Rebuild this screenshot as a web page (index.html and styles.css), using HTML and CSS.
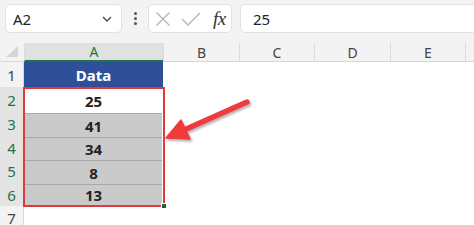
FILE: index.html
```html
<!DOCTYPE html>
<html>
<head>
<meta charset="utf-8">
<link rel="stylesheet" href="styles.css">
</head>
<body>
<div class="app">
  <div class="toolbar">
    <div class="namebox">
      <span class="name">A2</span>
      <svg class="chev" width="10" height="6" viewBox="0 0 10 6"><polyline points="1,1 5,5 9,1" fill="none" stroke="#444" stroke-width="1.3"/></svg>
    </div>
    <div class="dots"><i></i><i></i><i></i></div>
    <div class="fbtns">
      <svg width="16" height="16" viewBox="0 0 16 16"><path d="M1.5 1.5 L14.5 14.5 M14.5 1.5 L1.5 14.5" stroke="#b4b4b4" stroke-width="1.4" fill="none"/></svg>
      <svg width="20" height="16" viewBox="0 0 20 16"><polyline points="1,8 7,14 19,2" stroke="#b4b4b4" stroke-width="1.4" fill="none"/></svg>
      <span class="fx">fx</span>
    </div>
    <div class="finput">25</div>
  </div>
  <div class="sheet">
    <div class="corner"><svg width="14" height="12" viewBox="0 0 14 12"><polygon points="13,0 13,11 1,11" fill="#d6d6d6"/></svg></div>
    <div class="ch sel">A</div>
    <div class="ch">B</div>
    <div class="ch">C</div>
    <div class="ch">D</div>
    <div class="ch">E</div>
    <div class="ch last"></div>

    <div class="rh">1</div>
    <div class="cell head">Data</div>
    <div class="cell blank span5"></div>

    <div class="rh rsel">2</div>
    <div class="selection">
      <div class="scell active">25</div>
      <div class="scell">41</div>
      <div class="scell">34</div>
      <div class="scell">8</div>
      <div class="scell">13</div>
      <span class="handle"></span>
    </div>
    <div class="cell blank span5 r2"></div>
    <div class="rh rsel">3</div>
    <div class="rh rsel">4</div>
    <div class="rh rsel">5</div>
    <div class="rh rsel">6</div>
    <div class="rh">7</div>
    <div class="cell blank"></div>

    <svg class="arrow" width="100" height="56" viewBox="0 0 100 56">
      <defs>
        <filter id="sh" x="-20%" y="-20%" width="140%" height="150%">
          <feDropShadow dx="1.5" dy="2" stdDeviation="1.2" flood-color="#000" flood-opacity="0.3"/>
        </filter>
      </defs>
      <g filter="url(#sh)">
        <line x1="87" y1="7" x2="24" y2="35" stroke="#ee3b3b" stroke-width="5.5" stroke-linecap="round"/>
        <polygon points="6,43 21,25 30,44" fill="#ee3b3b" stroke="#ee3b3b" stroke-width="1.5" stroke-linejoin="round"/>
      </g>
    </svg>
  </div>
</div>
</body>
</html>
```

FILE: styles.css
```css
* { box-sizing: border-box; }
html, body { margin: 0; padding: 0; }
body {
  width: 474px;
  height: 225px;
  overflow: hidden;
  background: #fff;
  font-family: "Segoe UI", "Noto Sans", "Open Sans", sans-serif;
}
.app { width: 474px; height: 225px; overflow: hidden; }
.toolbar {
  height: 43px;
  background: #f3f3f3;
  display: flex;
  align-items: flex-start;
  padding: 4px 0 0 5px;
}
.namebox {
  width: 117px;
  height: 29px;
  background: #fff;
  border: 1px solid #e2e2e2;
  border-radius: 5px;
  display: flex;
  align-items: center;
  justify-content: space-between;
  padding: 0 9px 0 7px;
}
.name { font-size: 15px; color: #222; }
.dots {
  width: 26px;
  height: 29px;
  display: flex;
  flex-direction: column;
  align-items: center;
  justify-content: center;
  gap: 2px;
}
.dots i { width: 3px; height: 3px; background: #555; border-radius: 50%; display: block; }
.fbtns {
  width: 84px;
  height: 29px;
  background: #fff;
  border: 1px solid #e2e2e2;
  border-radius: 5px;
  display: flex;
  align-items: center;
  padding: 0 4px 0 6px;
  gap: 10px;
}
.fx {
  font-family: "Liberation Serif", serif;
  font-style: italic;
  font-size: 19px;
  color: #333;
  margin-left: 2px;
  letter-spacing: -0.5px;
}
.finput {
  flex: 1;
  margin-left: 8px;
  margin-right: -6px;
  height: 29px;
  background: #fff;
  border: 1px solid #e2e2e2;
  border-radius: 5px;
  font-size: 15px;
  color: #222;
  display: flex;
  align-items: center;
  padding-left: 12px;
}
.sheet {
  position: relative;
  display: grid;
  grid-template-columns: 24px 139px 76px 75px 76px 75px 1fr;
  grid-template-rows: 19px 25px 25px 24px 23px 24px 23px 24px;
}
.corner {
  background: #f3f3f3;
  display: flex;
  align-items: flex-end;
  justify-content: center;
  padding-bottom: 3px;
  border-bottom: 1px solid #d8d8d8;
}
.ch {
  background: #f3f3f3;
  border-left: 1px solid #dcdcdc;
  border-bottom: 1px solid #d8d8d8;
  font-size: 14px;
  color: #444;
  display: flex;
  align-items: center;
  justify-content: center;
}
.ch.sel {
  background: #e1e1e1;
  color: #217346;
  border-bottom: 2px solid #217346;
}
.rh {
  background: #f3f3f3;
  border-right: 1px solid #d8d8d8;
  font-size: 15px;
  color: #444;
  display: flex;
  align-items: center;
  justify-content: center;
}
.rh.rsel { background: #e4e4e4; color: #217346; }
.cell { background: #fff; }
.cell.head {
  background: #2f4f99;
  color: #fff;
  font-weight: bold;
  font-size: 15px;
  display: flex;
  align-items: center;
  justify-content: center;
}
.span5 { grid-column: 3 / 8; }
.r2 { grid-row: 3 / 8; }
.selection {
  grid-column: 2;
  grid-row: 3 / 8;
  position: relative;
  margin: 0 -2px -1px -1px;
  border: 2px solid #e0393b;
  background: #fff;
  display: grid;
  grid-template-rows: 24px 24px 23px 24px 1fr;
  padding: 0 1px 1px 0;
}
.scell {
  background: #cacaca;
  border-top: 1px solid #a9a9a9;
  font-size: 15px;
  font-weight: bold;
  color: #222;
  display: flex;
  align-items: center;
  justify-content: center;
}
.scell.active { background: #fff; border-top: none; }
.handle {
  position: absolute;
  right: -4px;
  bottom: -4px;
  width: 6px;
  height: 6px;
  background: #2b5a3c;
  border: 1px solid #fff;
}
.arrow {
  position: absolute;
  left: 160px;
  top: 52px;
}
```
